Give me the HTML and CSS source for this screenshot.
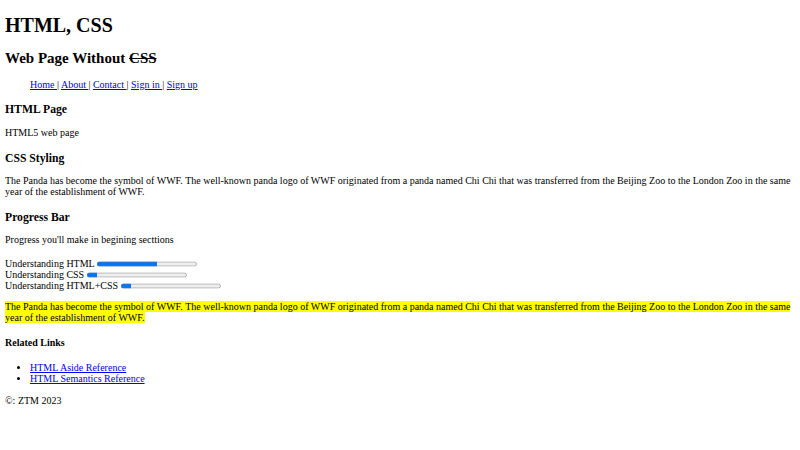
FILE: index.html
```html
<!DOCTYPE html>
<html lang="en">
<head>
    <meta charset="UTF-8">
    <meta name="viewport" content="width=device-width, initial-scale=1.0">
    <title>HTML, CSS</title>
    <link rel="stylesheet" href="styles.css">
</head>
<body>
    <header>
        <h1>HTML, CSS</h1>
        <h2>Web Page Without <s>CSS</s></h2>
        <nav class="main-nav">
            <a href="#">Home </a>| <a href="#">About </a>| <a href="#">Contact </a>| <a href="#">Sign in </a>| <a href="#">Sign up</a>
        </nav>
    </header>
    <main>
        <section>
            <h3>HTML Page</h3>
            <p>HTML5 web page</p>
        </section>
        <section>
            <h3>CSS Styling</h3>
            <p>The Panda has become the symbol of WWF. The well-known panda logo of WWF originated from a panda named Chi Chi that was transferred from the Beijing Zoo to the London Zoo in the same year of the establishment of WWF.</p>
        </section>
        <section>
            <h3>Progress Bar</h3>
            <p>Progress you'll make in begining secttions</p>
            <div class="progress-list">
                <label for="html-progress">Understanding HTML</label>
                <progress id="html-progress" value="60" max="100">60%</progress><br>
                <label for="css-progress">Understanding CSS</label>
                <progress id="css-progress" value="10" max="100">10%</progress><br>
                <label for="both-progress">Understanding HTML+CSS</label>
                <progress id="both-progress" value="10" max="100">10%</progress>
            </div>
        </section>
        <p><mark>The Panda has become the symbol of WWF. The well-known panda logo of WWF originated from a panda named Chi Chi that was transferred from the Beijing Zoo to the London Zoo in the same year of the establishment of WWF.</mark></p>
        <aside>
            <h4>Related Links</h4>
            <ul class="related-list">
                <li><a href="#">HTML Aside Reference</a></li>
                <li><a href="#">HTML Semantics Reference</a></li>
            </ul>
        </aside>
    </main>
    <footer>
        <p class="copyright">&copy;: ZTM 2023</p>
    </footer>
</body>
</html>
```

FILE: styles.css
```css
body {
    margin: 5px;
    font-family: "Liberation Serif", "Times New Roman", serif;
    font-size: 10px;
    color: #000;
    background-color: #fff;
}
h1 {
    font-size: 20px;
    margin: 9px 0 13.4px;
}
h2 {
    font-size: 15px;
    margin: 12.5px 0 11.5px;
}
h3 {
    font-size: 11.7px;
    margin: 13.5px 0 10.7px;
}
h4 {
    font-size: 10px;
    margin: 13.3px 0 14.3px;
}
p {
    margin: 10px 0;
}
a {
    color: #0000ee;
}
.main-nav {
    margin: 10px 0;
    padding-left: 25px;
}
.progress-list {
    margin: 13px 0 10px;
}
mark {
    background-color: #ffff00;
}
.related-list {
    margin: 10px 0;
    padding-left: 25px;
}
.copyright {
    margin-top: 11px;
}
```
